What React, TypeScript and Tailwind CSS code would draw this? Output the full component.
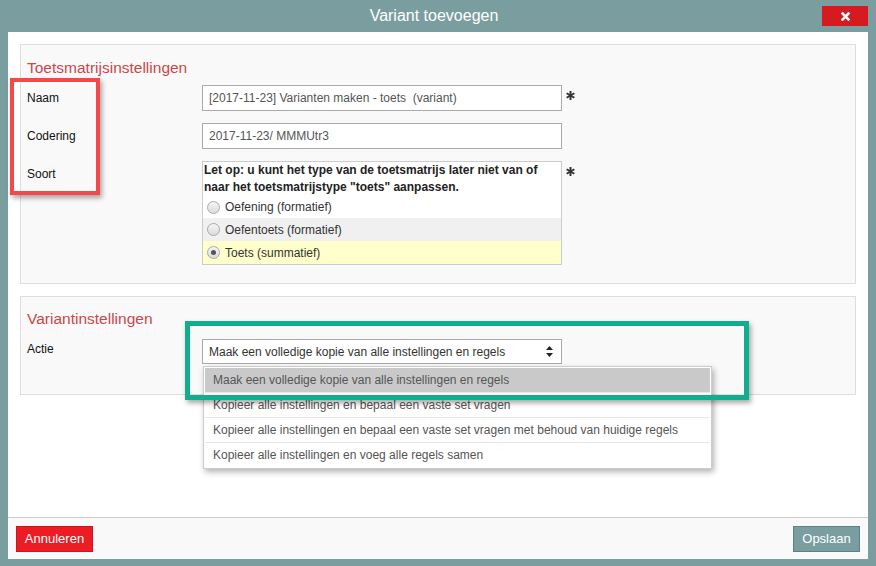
import React from 'react'

const font = { fontFamily: '"Liberation Sans", Arial, sans-serif' }

function Star() {
  return (
    <svg width="9" height="9" viewBox="0 0 10 10" className="ml-[4px] shrink-0">
      <g stroke="#333" strokeWidth="2.2" strokeLinecap="butt">
        <line x1="5" y1="0" x2="5" y2="10" />
        <line x1="0.7" y1="2.5" x2="9.3" y2="7.5" />
        <line x1="0.7" y1="7.5" x2="9.3" y2="2.5" />
      </g>
    </svg>
  )
}

function Radio({ checked }: { checked?: boolean }) {
  return (
    <span className="flex size-[13px] shrink-0 items-center justify-center rounded-full border border-[#a9a9a9] bg-gradient-to-b from-[#f4f4f4] to-[#dcdcdc]">
      {checked && <span className="size-[5px] rounded-full bg-[#555]" />}
    </span>
  )
}

const options = [
  'Maak een volledige kopie van alle instellingen en regels',
  'Kopieer alle instellingen en bepaal een vaste set vragen',
  'Kopieer alle instellingen en bepaal een vaste set vragen met behoud van huidige regels',
  'Kopieer alle instellingen en voeg alle regels samen',
]

export default function App() {
  return (
    <div style={font} className="flex h-[566px] w-[876px] flex-col bg-[#7a9e9f]">
      {/* Title bar */}
      <div className="flex h-[32px] shrink-0 items-start">
        <div className="flex-1" />
        <div className="pt-[6px] text-[16px] leading-[20px] text-white">Variant toevoegen</div>
        <div className="flex flex-1 justify-end pr-[8px] pt-[6px]">
          <button className="flex h-[20px] w-[46px] items-center justify-center bg-[#d71920]">
            <svg width="9" height="9" viewBox="0 0 9 9">
              <g stroke="#fff" strokeWidth="2.6" strokeLinecap="square">
                <line x1="1.5" y1="1.5" x2="7.5" y2="7.5" />
                <line x1="7.5" y1="1.5" x2="1.5" y2="7.5" />
              </g>
            </svg>
          </button>
        </div>
      </div>

      {/* Body */}
      <div className="mx-[8px] mb-[7px] flex flex-1 flex-col bg-white">
        <div className="relative flex-1 px-[12px] pt-[12px]">
          {/* Toetsmatrijsinstellingen */}
          <div className="border border-[#dddddd] bg-[#f9f9f9] px-[6px] pt-[13px] pb-[18px]">
            <div className="h-[20px] text-[15.5px] leading-[20px] text-[#c9474b]">Toetsmatrijsinstellingen</div>
            <div className="mt-[7px] flex flex-col gap-[12px] text-[12px]">
              <div className="flex items-center">
                <div className="w-[175px] text-[#111]">Naam</div>
                <div className="flex h-[26px] w-[360px] items-center border border-[#aaaaaa] bg-white px-[6px] text-[#555]">
                  [2017-11-23] Varianten maken - toets&nbsp;&nbsp;(variant)
                </div>
                <div className="-mt-[6px]">
                  <Star />
                </div>
              </div>
              <div className="flex items-center">
                <div className="w-[175px] text-[#111]">Codering</div>
                <div className="flex h-[26px] w-[360px] items-center border border-[#aaaaaa] bg-white px-[6px] text-[#555]">
                  2017-11-23/ MMMUtr3
                </div>
              </div>
              <div className="flex items-start">
                <div className="w-[175px] pt-[4px] text-[#111]">Soort</div>
                <div className="w-[360px] border border-[#cccccc] bg-white">
                  <div className="px-[1px] text-[12px] font-bold leading-[17px] text-[#222]">
                    Let op: u kunt het type van de toetsmatrijs later niet van of naar het toetsmatrijstype "toets" aanpassen.
                  </div>
                  <div className="flex h-[22px] items-center gap-[5px] px-[4px] text-[#333]">
                    <Radio />
                    Oefening (formatief)
                  </div>
                  <div className="flex h-[23px] items-center gap-[5px] bg-[#f0f0f0] px-[4px] text-[#333]">
                    <Radio />
                    Oefentoets (formatief)
                  </div>
                  <div className="flex h-[23px] items-center gap-[5px] bg-[#ffffcc] px-[4px] text-[#333]">
                    <Radio checked />
                    Toets (summatief)
                  </div>
                </div>
                <div className="mt-[6px]">
                  <Star />
                </div>
              </div>
            </div>
          </div>

          {/* Variantinstellingen */}
          <div className="mt-[12px] h-[99px] border border-[#dddddd] bg-[#f9f9f9] px-[6px] pt-[12px]">
            <div className="h-[20px] text-[15.5px] leading-[20px] text-[#c9474b]">Variantinstellingen</div>
            <div className="mt-[10px] flex items-start text-[12px]">
              <div className="w-[175px] pt-[1px] text-[#111]">Actie</div>
              <div className="relative w-[360px]">
                <div className="flex h-[25px] items-center justify-between border border-[#aaaaaa] bg-white pl-[6px] pr-[8px] text-[#333]">
                  <span>{options[0]}</span>
                  <svg width="7" height="11" viewBox="0 0 7 11">
                    <path d="M3.5 0 L7 4 H0 Z M0 7 H7 L3.5 11 Z" fill="#222" />
                  </svg>
                </div>
                {/* Open list */}
                <div className="absolute top-[27px] left-[1px] z-10 w-[509px] border border-[#cccccc] bg-white p-[1px] shadow-[2px_3px_6px_rgba(0,0,0,0.3)]">
                  {options.map((o, i) => (
                    <div
                      key={o}
                      className={
                        i === 0
                          ? 'flex h-[24px] items-center bg-[#c9c9c9] px-[8px] text-[#555]'
                          : 'flex h-[25px] items-center border-t border-[#e6e6e6] px-[8px] text-[#555]'
                      }
                    >
                      {o}
                    </div>
                  ))}
                </div>
              </div>
            </div>
          </div>

          {/* annotation boxes */}
          <div className="pointer-events-none absolute top-[46px] left-[2px] h-[117px] w-[90px] border-[4px] border-[#f24a4a] shadow-[2px_3px_5px_rgba(0,0,0,0.35)]" />
          <div className="pointer-events-none absolute top-[289px] left-[177px] z-20 h-[79px] w-[564px] border-[5px] border-[#12ad8e] shadow-[2px_3px_5px_rgba(0,0,0,0.35)]" />
        </div>

        {/* Footer */}
        <div className="flex h-[42px] shrink-0 items-start justify-between border-t border-[#cccccc] bg-[#f9f9f9] px-[8px] pt-[8px]">
          <button className="h-[26px] w-[77px] border border-[#c8161e] bg-[#ed1c24] text-[13px] text-white">Annuleren</button>
          <button className="h-[26px] w-[67px] border border-[#5d8283] bg-[#7a9e9f] text-[13px] text-white">Opslaan</button>
        </div>
      </div>
    </div>
  )
}
